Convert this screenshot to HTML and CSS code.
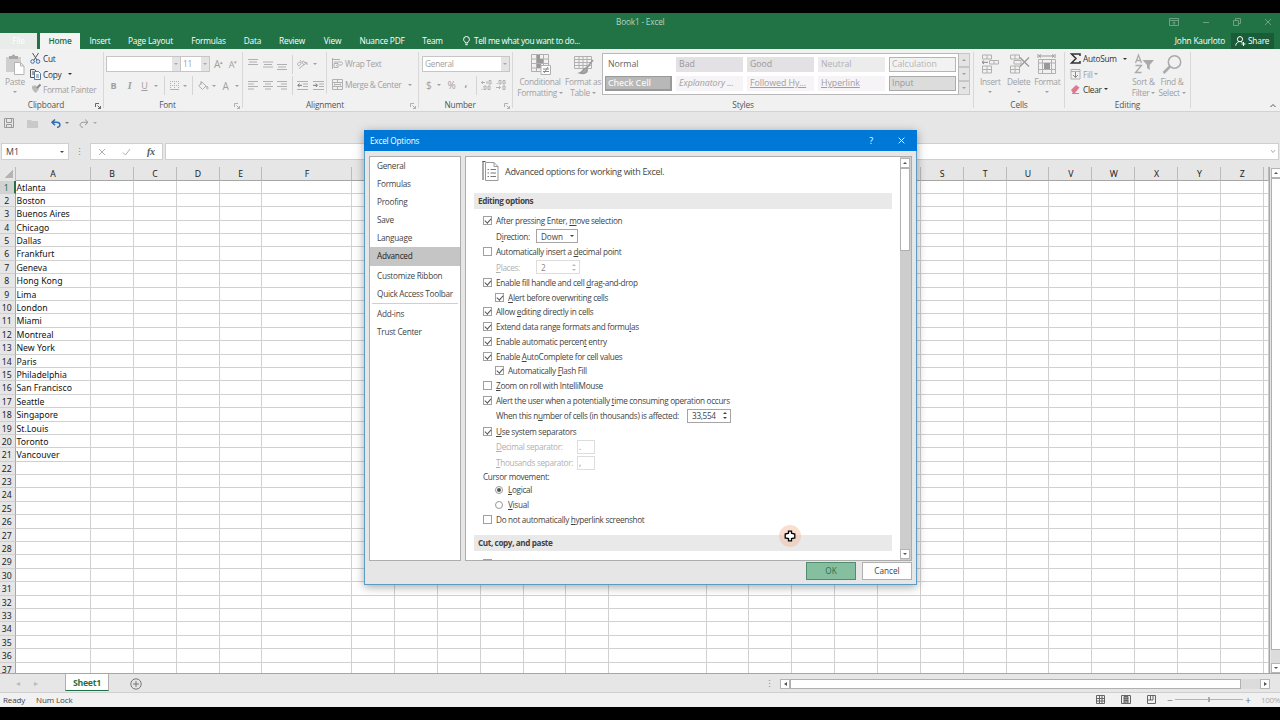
FILE: index.html
```html
<!DOCTYPE html>
<html lang="en">
<head>
    <meta charset="UTF-8">
    <meta name="viewport" content="width=device-width, initial-scale=1.0">
    <title>Book1 - Excel</title>
    <link rel="stylesheet" href="styles.css">
</head>
<body>
<div class="app">
    <!-- title bar -->
    <header class="titlebar">
        <span class="doc-title">Book1 - Excel</span>
        <div class="window-buttons">
            <svg width="10" height="8" viewBox="0 0 10 8"><path d="M.5 .5h9v7h-9zM.5 2.500h9M5 7V4M3.500 5.200L5 3.800l1.500 1.400"/></svg>
            <svg width="8" height="8" viewBox="0 0 8 8"><path d="M1 4.500h6"/></svg>
            <svg width="8" height="8" viewBox="0 0 8 8"><path d="M.5 2.500h5v5h-5zM2.500 2.500v-2h5v5h-2"/></svg>
            <svg width="8" height="8" viewBox="0 0 8 8"><path d="M1 1l6 6M7 1L1 7"/></svg>
        </div>
    </header>

    <nav class="tabs">
        <span class="tab file">File</span>
        <span class="tab active">Home</span>
        <span class="tab" style="width: 40px">Insert</span>
        <span class="tab" style="width: 61px">Page Layout</span>
        <span class="tab" style="width: 55px">Formulas</span>
        <span class="tab" style="width: 33px">Data</span>
        <span class="tab" style="width: 46px">Review</span>
        <span class="tab" style="width: 35px">View</span>
        <span class="tab" style="width: 64px">Nuance PDF</span>
        <span class="tab" style="width: 37px">Team</span>
        <span class="tell-me">
            <svg width="7" height="10" viewBox="0 0 7 10"><path d="M2.300 7V6C1 5.200.6 4.300.6 3.400a2.900 2.900 0 0 1 5.800 0C6.400 4.300 6 5.200 4.700 6v1zM2.300 8.700h2.400"/></svg>
            Tell me what you want to do...
        </span>
        <span class="user">John Kaurloto</span>
        <span class="share">
            <svg width="11" height="10" viewBox="0 0 11 10"><circle cx="5" cy="3.200" r="2.600"/><path d="M.7 9.500c.3-2 1.400-3.300 3-3.700M6 5.700l1.500 1M8.500 6v4M6.500 8h4"/></svg>
            Share
        </span>
    </nav>

    <!-- ribbon -->
    <section class="ribbon">
        <div class="group clipboard">
            <div class="group-body">
                <div class="big-btn paste">
                    <svg width="20" height="21" viewBox="0 0 20 21"><path class="soft" d="M1 3h15v15H1z"/><path class="dark" d="M4 2h3c0-2 3-2 3 0h3v3H4z"/><path class="paper" d="M9.500 8.500h6l3.500 3.500v8.500H9.500zM15.500 8.500V12H19"/></svg>
                    <span>Paste</span><i class="arrow"></i>
                </div>
                <div class="stack">
                    <div class="small-btn on"><svg width="11" height="11" viewBox="0 0 11 11"><path d="M2.500 0l4.500 7M8.500 0L4 7" stroke="#555"/><circle cx="2.600" cy="8.500" r="1.800" stroke="#3d6fa8"/><circle cx="8" cy="8.500" r="1.800" stroke="#3d6fa8"/></svg>Cut</div>
                    <div class="small-btn on"><svg width="11" height="11" viewBox="0 0 11 11"><path d="M4 8.500H.5v-8h4L6 2M2 3h2M2 5h2" stroke="#555"/><path d="M4.500 2.500h4l2 2v6h-6zM6 6h3M6 8h3" fill="#fff" stroke="#56789a"/></svg>Copy <i class="arrow copy-arrow"></i></div>
                    <div class="small-btn painter"><svg width="10" height="10" viewBox="0 0 10 10"><path d="M1 3l4-1 3 3-3 4C3 8 1 6 1 3z" fill="#bbb" stroke="none"/><path d="M2 1.500v3M4 1v3" stroke="#aaa"/><path d="M6 4l3.500-3.500" stroke="#888" stroke-width="2"/></svg>Format Painter</div>
                </div>
            </div>
            <div class="group-name">Clipboard<svg class="launcher on" width="6" height="6" viewBox="0 0 6 6"><path d="M.5 4V.5H4M2.500 2.500l3 3M5.500 3v2.500H3"/></svg></div>
        </div>

        <div class="group font">
            <div class="line one">
                <span class="combo face"><i class="drop"></i></span>
                <span class="combo size">11<i class="drop"></i></span>
                <span class="glyph grow">A<sup>▴</sup></span>
                <span class="glyph shrink">A<sup>▾</sup></span>
            </div>
            <div class="line two">
                <b>B</b><em>I</em><u>U</u><i class="arrow"></i><i class="bar"></i>
                <svg width="9" height="9" viewBox="0 0 9 9"><path d="M0 .5h9M.5 0v9M8.500 0v9M4.500 0v9M0 4.500h9" stroke-dasharray="1 1"/><path d="M0 8.500h9"/></svg>
                <i class="arrow"></i><i class="bar"></i>
                <svg width="11" height="10" viewBox="0 0 11 10"><path d="M4 1l4 4-3.500 3.500L.8 5zM3 0v4M9 5c1.500 2 1 3 .3 3S8 7 9 5z"/></svg>
                <i class="arrow"></i><span class="glyph">A</span><i class="arrow"></i>
            </div>
            <div class="group-name">Font<svg class="launcher" width="6" height="6" viewBox="0 0 6 6"><path d="M.5 4V.5H4M2.500 2.500l3 3M5.500 3v2.500H3"/></svg></div>
        </div>

        <div class="group alignment">
            <div class="align-cols">
                <div class="line one">
                    <svg width="10" height="11" viewBox="0 0 10 11"><path d="M0 .5h10M1 3h8M0 5.500h10"/></svg>
                    <svg width="10" height="11" viewBox="0 0 10 11"><path d="M0 3h10M1 5.500h8M0 8h10"/></svg>
                    <svg width="10" height="11" viewBox="0 0 10 11"><path d="M0 5.500h10M1 8h8M0 10.500h10"/></svg>
                    <i class="bar"></i>
                    <svg width="11" height="10" viewBox="0 0 11 10"><path d="M1 4c2-2 4 0 2 2S0 5 1 4zM3 1l4 5M5 3c2-2 3 0 2 1M2 9.500l8-6M10 6V3.500H7.500"/></svg>
                    <i class="arrow"></i>
                </div>
                <div class="line two">
                    <svg width="10" height="9" viewBox="0 0 10 9"><path d="M0 .5h10M0 3h6M0 5.500h10M0 8h6"/></svg>
                    <svg width="10" height="9" viewBox="0 0 10 9"><path d="M0 .5h10M2 3h6M0 5.500h10M2 8h6"/></svg>
                    <svg width="10" height="9" viewBox="0 0 10 9"><path d="M0 .5h10M4 3h6M0 5.500h10M4 8h6"/></svg>
                    <i class="bar"></i>
                    <svg width="11" height="9" viewBox="0 0 11 9"><path d="M0 .5h11M6 3h5M6 5.500h5M0 8.500h11"/><path d="M5 4.300H1M2.500 2.500L.8 4.300 2.500 6" stroke="#777"/></svg>
                    <svg width="11" height="9" viewBox="0 0 11 9"><path d="M0 .5h11M6 3h5M6 5.500h5M0 8.500h11"/><path d="M0 4.300h4M2.800 2.500l1.700 1.800L2.800 6" stroke="#777"/></svg>
                </div>
            </div>
            <div class="wrap-col">
                <div class="small-btn"><svg width="11" height="11" viewBox="0 0 11 11"><path d="M.5 0v11M1 1.500h7M2 4h7c2 0 2 3 0 3H7M2 5.500h4v4H2zM4 7.500h1"/></svg>Wrap Text</div>
                <div class="small-btn"><svg width="11" height="11" viewBox="0 0 11 11"><path d="M.5 .5h10v10H.5zM.5 3.500h10M.5 7.500h10M5.500 .5v3M5.500 7.500v3M2 5.500h7M3 4.700l-1 .8 1 .8M8 4.700l1 .8-1 .8"/></svg>Merge &amp; Center <i class="arrow merge-arrow"></i></div>
            </div>
            <div class="group-name">Alignment<svg class="launcher" width="6" height="6" viewBox="0 0 6 6"><path d="M.5 4V.5H4M2.500 2.500l3 3M5.500 3v2.500H3"/></svg></div>
        </div>

        <div class="group number">
            <div class="line one"><span class="combo format">General<i class="drop"></i></span></div>
            <div class="line two">
                <span class="glyph">$</span><i class="arrow"></i><span class="glyph">%</span><span class="glyph comma">,</span><i class="bar"></i>
                <svg width="11" height="10" viewBox="0 0 11 10"><path d="M0 2.500h4M2 1L.5 2.500 2 4M6 1v3M8 .5h2v3.500H8zM3 6h2v3.500H3zM7 6h2v3.500H7zM1 9v1"/></svg>
                <svg width="11" height="10" viewBox="0 0 11 10"><path d="M3 .5h2v3.500H3zM7 .5h2v3.500H7zM1 3v1M0 7.500h4M3 6l1.500 1.500L3 9M7 6h2v3.500H7z"/></svg>
            </div>
            <div class="group-name">Number<svg class="launcher" width="6" height="6" viewBox="0 0 6 6"><path d="M.5 4V.5H4M2.500 2.500l3 3M5.500 3v2.500H3"/></svg></div>
        </div>

        <div class="group styles">
            <div class="styles-body">
                <div class="big-btn cond">
                    <svg width="21" height="21" viewBox="0 0 21 21"><path d="M1.500 .5h17v17h-17zM1.500 5h17M1.500 9.500h17M1.500 14h17M6.500 .5v17M13.500 .5v17"/><path d="M7 1h3v4H7zM7 5h6v4H7zM7 10h4v4H7z" fill="#999" stroke="none"/><path d="M11 11.500h9.500v9H11z" fill="#fff"/><path d="M13 15h6M13 17.500h6M18 13l-4 6" stroke="#888"/></svg>
                    <span>Conditional<br>Formatting <i class="arrow"></i></span>
                </div>
                <div class="big-btn as-table">
                    <svg width="21" height="21" viewBox="0 0 21 21"><path d="M1.500 2.500h17v12h-17zM1.500 5.500h17M1.500 8.500h17M1.500 11.500h17M6 2.500v12M10 2.500v12M14 2.500v12"/><path d="M20 6l-7 9M13 14c-3 0-3 4-6 5 4 1 8 0 7-4z" fill="#aaa" stroke="#999" stroke-width="1.500"/></svg>
                    <span>Format as<br>Table <i class="arrow"></i></span>
                </div>
                <div class="gallery">
                    <span class="st normal">Normal</span>
                    <span class="st fill">Bad</span>
                    <span class="st fill">Good</span>
                    <span class="st neutral">Neutral</span>
                    <span class="st calc">Calculation</span>
                    <span class="st check">Check Cell</span>
                    <span class="st expl">Explanatory ...</span>
                    <span class="st link">Followed Hy...</span>
                    <span class="st link">Hyperlink</span>
                    <span class="st input">Input</span>
                </div>
                <div class="gallery-scroll"><span><i class="arrow up"></i></span><span><i class="arrow"></i></span><span><i class="arrow"></i></span></div>
            </div>
            <div class="group-name">Styles</div>
        </div>

        <div class="group cells">
            <div class="cells-body">
                <div class="big-btn">
                    <svg width="20" height="20" viewBox="0 0 20 20"><path d="M2.500 .5h9v4h-9zM7 .5v4M2.500 11.500h9v7h-9zM7 11.500v7M2.500 15h9M9.500 6h9v3.500h-9zM14 6v3.500"/><path d="M8 7.800H2M4 6L2 7.800 4 9.500" stroke="#888"/></svg>
                    <span>Insert</span><i class="arrow"></i>
                </div>
                <div class="big-btn">
                    <svg width="20" height="20" viewBox="0 0 20 20"><path d="M1.500 .5h9v4h-9zM6 .5v4M1.500 11.500h9v7h-9zM6 11.500v7M1.500 15h9M5 6h7v3.500H5z"/><path d="M11 3l9 9M20 3l-9 9" stroke="#999" stroke-width="1.300"/></svg>
                    <span>Delete</span><i class="arrow"></i>
                </div>
                <div class="big-btn">
                    <svg width="20" height="21" viewBox="0 0 20 21"><path d="M1.500 5.500h17v14h-17zM5.500 5.500v14M14.500 5.500v14M1.500 9h17M1.500 15.500h17"/><path d="M2 2h15M4 .5L2 2l2 1.500M15 .5L17 2l-2 1.500M1 0v4M18 0v4" stroke="#999"/><path d="M7 9h6v6H7z" fill="#999" stroke="none"/></svg>
                    <span>Format</span><i class="arrow"></i>
                </div>
            </div>
            <div class="group-name">Cells</div>
        </div>

        <div class="group editing">
            <div class="editing-body">
                <div class="stack">
                    <div class="small-btn on"><svg width="11" height="11" viewBox="0 0 11 11"><path d="M10 3V1H1.500l4.500 4.500L1.500 10H10V8" stroke="#333" stroke-width="1.500"/></svg>AutoSum <i class="arrow sum"></i></div>
                    <div class="small-btn"><svg width="11" height="11" viewBox="0 0 11 11"><path d="M1 .5h9v9.500H1zM1 2.500h9"/><path d="M5.500 3v5.500M3 6l2.500 2.500L8 6" stroke="#888"/></svg>Fill <i class="arrow"></i></div>
                    <div class="small-btn on"><svg width="11" height="11" viewBox="0 0 11 11"><path d="M1 6l5-5 3.500 2.500L5 9H3z" fill="#e0798f" stroke="none"/><path d="M2 9.500h7" stroke="#999"/></svg>Clear <i class="arrow"></i></div>
                </div>
                <div class="big-btn sort">
                    <svg width="20" height="20" viewBox="0 0 20 20"><path d="M1.500 8.500l3-8 3 8M2.500 6h4M1.500 11h6l-6 7h6" stroke="#aaa" stroke-width="1.300"/><path d="M8.500 5.500h11.500l-4.300 5v5l-2.700-2v-3z" fill="#aaa" stroke="none"/></svg>
                    <span>Sort &amp;<br>Filter <i class="arrow"></i></span>
                </div>
                <div class="big-btn find">
                    <svg width="20" height="20" viewBox="0 0 20 20"><circle cx="12.500" cy="7.500" r="6.200" stroke="#aaa" stroke-width="1.500"/><path d="M8 12l-6.500 6.500" stroke="#aaa" stroke-width="2.500"/></svg>
                    <span>Find &amp;<br>Select <i class="arrow"></i></span>
                </div>
            </div>
            <div class="group-name">Editing</div>
        </div>
        <svg class="collapse" width="6" height="5" viewBox="0 0 6 5"><path d="M.5 4L3 1.500 5.500 4"/></svg>
    </section>

    <!-- quick access toolbar -->
    <div class="qat">
        <svg width="10" height="10" viewBox="0 0 10 10"><path d="M.5 .5h9v9h-9zM2.500 .5v4h5v-4M2.500 9.500V6.500h5v3"/></svg>
        <svg width="11" height="9" viewBox="0 0 11 9"><path d="M0 1h4l1 1h6v7H0z" fill="#c9c9c9" stroke="none"/></svg>
        <svg class="undo" width="10" height="9" viewBox="0 0 10 9"><path d="M4 .5L1 3.300l3 2.800M1 3.300h4.500c4.500 0 4.500 5 .5 5"/></svg>
        <i class="arrow"></i>
        <svg class="redo" width="10" height="9" viewBox="0 0 10 9"><path d="M6 .5l3 2.800-3 2.800M9 3.300H4.500C0 3.300 0 8.300 4 8.300"/></svg>
        <i class="arrow pale"></i>
    </div>

    <div class="formula-bar">
        <div class="name-box">M1<i class="arrow"></i></div>
        <span class="grip">⋮</span>
        <div class="fx-box">
            <svg width="8" height="8" viewBox="0 0 8 8"><path d="M1 1l6 6M7 1L1 7"/></svg>
            <svg width="9" height="8" viewBox="0 0 9 8"><path d="M1 4.500l2.500 2.500L8 1"/></svg>
            <span class="fx">fx</span>
        </div>
        <div class="formula"><svg width="6" height="5" viewBox="0 0 6 5"><path d="M1 1l2 2.500L5 1"/></svg></div>
    </div>

    <!-- sheet, cells are filled by sheet.js -->
    <div class="sheet-area">
        <div class="sheet" id="sheet"></div>
        <div class="vscroll">
            <span class="sb-btn"><i class="arrow up"></i></span>
            <span class="thumb"></span>
            <span class="track"></span>
            <span class="sb-btn"><i class="arrow"></i></span>
        </div>
    </div>

    <div class="sheet-tabs">
        <span class="nav-arrow">◂</span><span class="nav-arrow">▸</span>
        <span class="sheet-tab">Sheet1</span>
        <svg class="add-sheet" width="12" height="12" viewBox="0 0 12 12"><circle cx="6" cy="6" r="5.200"/><path d="M6 3v6M3 6h6"/></svg>
        <span class="grip">⋮</span>
        <div class="hscroll">
            <span class="sb-btn"><i class="arrow left"></i></span>
            <span class="thumb"></span>
            <span class="track"></span>
            <span class="sb-btn"><i class="arrow right"></i></span>
        </div>
    </div>

    <footer class="status">
        <span class="ready">Ready</span>
        <span class="numlock">Num Lock</span>
        <svg width="9" height="9" viewBox="0 0 9 9"><path d="M.5 .5h8v8h-8zM3.500 .5v8M6 .5v8M.5 3.500h8M.5 6h8"/></svg>
        <svg width="10" height="9" viewBox="0 0 10 9"><path d="M.5 .5h9v8h-9z"/><path d="M3 1.500h4v7H3zM3 3.500h4M3 5.500h4" fill="#999"/></svg>
        <svg width="9" height="9" viewBox="0 0 9 9"><path d="M.5 .5h8v8h-8zM3.500 .5v4.500M6 .5V5M.5 5h5.500"/></svg>
        <span class="zoom-sign">−</span>
        <span class="zoom-line"><i></i></span>
        <span class="zoom-sign">+</span>
        <span class="zoom-value">100%</span>
    </footer>
</div>

<!-- options dialog -->
<div class="dialog">
    <div class="dialog-title">
        <span>Excel Options</span>
        <span class="help">?</span>
        <svg width="7" height="7" viewBox="0 0 7 7"><path d="M.7 .7l5.600 5.600M6.300 .7L.7 6.300"/></svg>
    </div>
    <div class="dialog-main">
        <ul class="pages">
            <li>General</li>
            <li>Formulas</li>
            <li>Proofing</li>
            <li>Save</li>
            <li>Language</li>
            <li class="selected">Advanced</li>
            <li>Customize Ribbon</li>
            <li>Quick Access Toolbar</li>
            <li class="separator"></li>
            <li>Add-ins</li>
            <li>Trust Center</li>
        </ul>
        <div class="page">
            <div class="options">
                <div class="intro">
                    <svg width="17" height="20" viewBox="0 0 17 20"><path d="M3.500 1.500h8.500l4 4v14H3.500zM12 1.500v4h4"/><path d="M1 0v19M.5 .5h3" stroke="#555"/><path d="M5.500 8.500h1.500M5.500 12h1.500M5.500 15.500h1.500M8.500 8.500h5.500M8.500 12h5.500M8.500 15.500h5.500" stroke="#777"/></svg>
                    Advanced options for working with Excel.
                </div>
                <h2>Editing options</h2>
                <div class="opt"><i class="box checked"></i><span>After pressing Enter, <u>m</u>ove selection</span></div>
                <div class="opt field"><span class="lbl">D<u>i</u>rection:</span><span class="select">Down<i class="arrow"></i></span></div>
                <div class="opt"><i class="box"></i><span>Automatically insert a <u>d</u>ecimal point</span></div>
                <div class="opt field off"><span class="lbl"><u>P</u>laces:</span><span class="spin">2<b><i class="arrow up"></i><i class="arrow"></i></b></span></div>
                <div class="opt"><i class="box checked"></i><span>Enable fill handle and cell <u>d</u>rag-and-drop</span></div>
                <div class="opt sub"><i class="box checked"></i><span><u>A</u>lert before overwriting cells</span></div>
                <div class="opt"><i class="box checked"></i><span>Allow <u>e</u>diting directly in cells</span></div>
                <div class="opt"><i class="box checked"></i><span>Extend data range formats and formu<u>l</u>as</span></div>
                <div class="opt"><i class="box checked"></i><span>Enable automatic percen<u>t</u> entry</span></div>
                <div class="opt"><i class="box checked"></i><span>Enable <u>A</u>utoComplete for cell values</span></div>
                <div class="opt sub"><i class="box checked"></i><span>Automatically <u>F</u>lash Fill</span></div>
                <div class="opt"><i class="box"></i><span><u>Z</u>oom on roll with IntelliMouse</span></div>
                <div class="opt"><i class="box checked"></i><span>Alert the user when a potentially <u>t</u>ime consuming operation occurs</span></div>
                <div class="opt field"><span class="lbl wide">When this n<u>u</u>mber of cells (in thousands) is affected:</span><span class="spin">33,554<b><i class="arrow up"></i><i class="arrow"></i></b></span></div>
                <div class="opt"><i class="box checked"></i><span><u>U</u>se system separators</span></div>
                <div class="opt field off"><span class="lbl sep"><u>D</u>ecimal separator:</span><span class="mini">.</span></div>
                <div class="opt field off"><span class="lbl sep"><u>T</u>housands separator:</span><span class="mini">,</span></div>
                <div class="opt caption"><span>Cursor movement:</span></div>
                <div class="opt sub"><i class="radio on"></i><span><u>L</u>ogical</span></div>
                <div class="opt sub"><i class="radio"></i><span><u>V</u>isual</span></div>
                <div class="opt"><i class="box"></i><span>Do not automatically <u>h</u>yperlink screenshot</span></div>
                <h2 class="next">Cut, copy, and paste</h2>
                <div class="opt"><i class="box"></i></div>
            </div>
            <div class="page-scroll">
                <span class="sb-btn"><i class="arrow up"></i></span>
                <span class="thumb"></span>
                <span class="track"></span>
                <span class="sb-btn"><i class="arrow"></i></span>
            </div>
        </div>
    </div>
    <div class="dialog-buttons">
        <span class="btn ok">OK</span>
        <span class="btn">Cancel</span>
    </div>
</div>

<!-- mouse pointer with click highlight -->
<div class="pointer">
    <svg width="12" height="12" viewBox="0 0 12 12"><path d="M4.500 1.200h3v2l3.300.8v4l-3.300.5v2.300h-3v-2.300L1.200 8V4l3.300-.8z"/></svg>
</div>

<script src="sheet.js"></script>
</body>
</html>
```
FILE: sheet.js
```js
const cities = ['Atlanta', 'Boston', 'Buenos Aires', 'Chicago', 'Dallas', 'Frankfurt', 'Geneva',
    'Hong Kong', 'Lima', 'London', 'Miami', 'Montreal', 'New York', 'Paris', 'Philadelphia',
    'San Francisco', 'Seattle', 'Singapore', 'St.Louis', 'Toronto', 'Vancouver'];
const letters = 'ABCDEFGHIJKLMNOPQRSTUVWXYZ';
const sheet = document.getElementById('sheet');

function add(text, className) {
    const cell = document.createElement('div');
    cell.className = className;
    cell.textContent = text;
    sheet.appendChild(cell);
}

// header row, the columns under the dialog stay blank
add('', 'corner');
for (const letter of letters) {
    add(letter > 'F' && letter < 'S' ? '' : letter, 'col-head');
}
add('', 'col-head');

for (let row = 1; row <= 37; row++) {
    add(row, row === 1 ? 'row-head current' : 'row-head');
    add(cities[row - 1] || '', 'cell');
    for (let col = 1; col <= 26; col++) {
        add('', 'cell');
    }
}
```
FILE: styles.css
```css
* {
    box-sizing: border-box;
}

body {
    margin: 0;
    width: 1280px;
    height: 720px;
    overflow: hidden;
    background: #000;
    font-family: "Open Sans", "Noto Sans", sans-serif;
    font-size: 8.300px;
    letter-spacing: -0.280px;
    color: #444;
    white-space: nowrap;
}

svg {
    display: block;
    flex: none;
    fill: none;
    stroke: #b0b0b0;
    overflow: visible;
}

.app {
    display: flex;
    flex-direction: column;
    height: 694px;
    margin-top: 13px;
    background: #e6e6e6;
}

.arrow {
    flex: none;
    display: inline-block;
    border: 2px solid transparent;
    border-top-color: currentColor;
    border-bottom: none;
    vertical-align: middle;
}

.arrow.up {
    border-top: none;
    border-bottom: 2px solid currentColor;
}

.arrow.left {
    border: 2px solid transparent;
    border-right: 3px solid currentColor;
    border-left: none;
}

.arrow.right {
    border: 2px solid transparent;
    border-left: 3px solid currentColor;
    border-right: none;
}

/* title bar and tabs */
.titlebar {
    display: flex;
    align-items: center;
    height: 20px;
    padding: 0 8px 3px 616px;
    background: #217346;
    color: #b5d3c1;
    letter-spacing: -0.200px;
}

.window-buttons {
    display: flex;
    gap: 23px;
    margin-left: auto;
}

.window-buttons svg {
    stroke: #6da384;
}

.tabs {
    display: flex;
    height: 16px;
    background: #217346;
    color: #fff;
    line-height: 16px;
    letter-spacing: -0.200px;
}

.tab {
    text-align: center;
}

.tab.file {
    width: 37px;
    margin-right: 3px;
    background: #e9ece9;
    color: #fff;
}

.tab.active {
    width: 40px;
    background: #f3f3f3;
    color: #217346;
    font-weight: 600;
}

.tell-me,
.share {
    display: flex;
    align-items: center;
    gap: 5px;
}

.tell-me {
    margin-left: 12px;
    gap: 4px;
    letter-spacing: -0.330px;
}

.tell-me svg,
.share svg {
    stroke: #fff;
}

.user {
    margin-left: auto;
}

.share {
    width: 43px;
    margin: 0 6px 0 6px;
    padding-left: 4px;
    gap: 2px;
    background: #1a5c38;
}

/* ribbon */
.ribbon {
    position: relative;
    display: flex;
    height: 63px;
    background: #f1f1f1;
    border-bottom: 1px solid #d2d2d2;
    color: #a0a0a0;
}

.group {
    display: flex;
    flex-direction: column;
    flex: none;
    margin: 3px 0;
    border-right: 1px solid #d8d8d8;
}

.clipboard { width: 104px; }
.font { width: 139px; }
.alignment { width: 176px; }
.number { width: 94px; }
.styles { width: 461px; }
.cells { width: 91px; }
.editing { width: 126px; }

.group-name {
    display: flex;
    justify-content: center;
    position: relative;
    height: 10px;
    margin-top: auto;
    line-height: 13px;
    letter-spacing: -0.150px;
    color: #555;
}

/* the name sits a little left of the group's middle */
.clipboard .group-name,
.font .group-name,
.alignment .group-name,
.number .group-name {
    padding-right: 11px;
}

.launcher {
    position: absolute;
    right: 2px;
    bottom: -1px;
}

.launcher.on {
    stroke: #666;
}

.group-body,
.styles-body,
.cells-body,
.editing-body {
    display: flex;
}

.big-btn {
    display: flex;
    flex-direction: column;
    align-items: center;
    text-align: center;
    line-height: 10.600px;
    padding-top: 2px;
}

.big-btn svg {
    height: 21px;
    margin-bottom: 2px;
}

.big-btn > .arrow {
    margin-top: 3px;
}

.paste {
    width: 30px;
}

.paste svg path { stroke: none; }
.paste .soft { fill: #cfcfcf; }
.paste .dark { fill: #a8a8a8; }
.paste svg .paper { fill: #fff; stroke: #b5b5b5; }

.small-btn {
    display: flex;
    align-items: center;
    height: 15.400px;
    gap: 2px;
}

.small-btn.on {
    color: #333;
}

.small-btn .copy-arrow {
    margin-left: 5px;
}

.small-btn .merge-arrow {
    margin-left: 5px;
}

.stack .painter svg {
    margin-left: 1px;
}

.painter,
.wrap-col {
    letter-spacing: -0.330px;
}

.stack {
    margin-top: -1px;
}

.line {
    display: flex;
    align-items: center;
}

.line.one {
    height: 24px;
}

.line.two {
    height: 18px;
}

.glyph {
    font-size: 10px;
}

.glyph sup {
    font-size: 5px;
}

.font .one {
    padding-left: 2px;
}

.combo {
    display: flex;
    height: 16px;
    padding-left: 2px;
    border: 1px solid #c6c6c6;
    background: #fff;
    line-height: 14px;
}

.combo.face { width: 75px; }
.combo.format { width: 88px; }

.combo.size {
    width: 29px;
    border-left: none;
}

.drop {
    display: flex;
    align-items: center;
    justify-content: center;
    width: 8px;
    margin-left: auto;
    background: #e4e4e4;
}

.drop::before {
    content: "";
    border: 2px solid transparent;
    border-top-color: #aaa;
    border-bottom: none;
}

.grow {
    margin-left: 4px;
}

.shrink {
    margin-left: 6px;
    font-size: 9px;
}

.font .two {
    display: grid;
    grid-template-columns: 17px 15px 15px 8px 8px 13px 8px 7px 14px 8px 15px 8px;
    justify-items: center;
    padding-left: 1px;
    font-size: 9px;
}

.font .two em {
    font-family: "Liberation Serif", serif;
    font-size: 10px;
    font-weight: 700;
}

.bar {
    flex: none;
    width: 1px;
    height: 19px;
    background: #d4d4d4;
}

.alignment {
    display: grid;
    grid-template-columns: 84px 1fr;
    grid-template-rows: 42px 1fr;
}

.alignment .group-name {
    grid-column: 1 / 3;
}

.align-cols {
    border-right: 1px solid #d8d8d8;
    padding-left: 5px;
}

.align-cols .line {
    gap: 4.500px;
}

.wrap-col {
    padding-left: 5px;
}

.wrap-col .small-btn {
    height: 23px;
}

.wrap-col .small-btn + .small-btn {
    height: 19px;
}

.number .line {
    padding-left: 3px;
}

.number .two {
    padding-left: 7px;
}

.number .two .arrow { margin: 0 6px; }
.number .comma { margin: -4px 9px 0 9px; font-weight: 700; }
.number .two svg { margin-left: 4px; }

/* cell styles gallery */
.cond {
    width: 48px;
    margin-left: 3px;
}

.as-table {
    width: 38px;
}

.gallery {
    display: grid;
    grid-template-columns: repeat(5, 67px);
    grid-template-rows: 15px 15px;
    gap: 4px;
    width: 357px;
    height: 42px;
    margin-top: 1px;
    padding: 3px 2px;
    border: 1px solid #b8b8b8;
    background: #fff;
}

.st {
    padding-left: 3px;
    line-height: 15px;
    font-size: 8.800px;
    letter-spacing: -0.050px;
    background: #f6f4f6;
}

.st.normal { background: #fff; color: #666; }
.st.fill { background: #e3e1e3; color: #999; }
.st.neutral { background: #ececec; color: #b0b0b0; }
.st.calc { border: 1px solid #b5b5b5; background: #f2f2f2; color: #b5b5b5; line-height: 13px; padding-left: 2px; }
.st.check { border: 1px solid #999; border-width: 1px 2px 2px 1px; background: #b8b8b8; color: #f4f4f4; font-weight: 600; line-height: 12px; padding-left: 2px; }
.st.expl { font-style: italic; }
.st.link { text-decoration: underline; }
.st.input { border: 1px solid #aaa; background: #dcdcdc; color: #999; line-height: 13px; padding-left: 2px; }

.gallery-scroll {
    display: flex;
    flex-direction: column;
    width: 11px;
    height: 42px;
    margin-top: 1px;
}

.gallery-scroll span {
    display: flex;
    flex: 1;
    align-items: center;
    justify-content: center;
    border: 1px solid #c6c6c6;
    border-left: none;
    background: #e4e4e4;
}

.cells-body {
    padding-left: 2px;
}

.cells-body .big-btn {
    width: 28.500px;
}

.editing-body {
    padding-left: 5px;
}

.editing .stack {
    width: 59px;
}

.editing .stack .sum {
    margin-left: 4px;
}

.sort {
    width: 29px;
}

.find {
    width: 28px;
}

.collapse {
    position: absolute;
    right: 4px;
    bottom: 3px;
    stroke: #555;
}

/* quick access toolbar */
.qat {
    display: flex;
    align-items: center;
    height: 31px;
    padding: 0 0 9px 4px;
    color: #777;
}

.qat svg { stroke: #999; }
.qat svg + svg { margin-left: 13px; }
.qat .undo { stroke: #2f6cb0; stroke-width: 1.500; }
.qat .arrow { margin-left: 4px; }
.qat .redo { margin-left: 10px; }
.qat .pale { color: #aaa; }

.formula-bar {
    display: flex;
    height: 24px;
    color: #555;
}

.name-box,
.fx-box,
.formula {
    display: flex;
    align-items: center;
    height: 17px;
    border: 1px solid #cfcfcf;
    background: #fff;
}

.name-box {
    width: 68px;
    margin-left: 1px;
    padding: 0 4px 0 4px;
    justify-content: space-between;
    color: #444;
    font-size: 8.800px;
    letter-spacing: 0;
}

.formula-bar .grip {
    width: 21px;
    text-align: center;
    font-size: 9px;
    line-height: 18px;
    color: #888;
}

.fx-box {
    width: 73px;
    padding-left: 7px;
    gap: 16px;
}

.fx {
    font-family: "Liberation Serif", serif;
    font-size: 10px;
    font-style: italic;
    font-weight: 700;
}

.formula {
    flex: 1;
    justify-content: flex-end;
    margin: 0 1px 0 2px;
    padding-right: 2px;
}

/* sheet */
.sheet-area {
    display: flex;
    height: 507px;
    border-bottom: 1px solid #a6a6a6;
    overflow: hidden;
}

.sheet {
    display: grid;
    width: 1270px;
    flex: none;
    grid-template-columns: 15.500px 75px 43px 43px 43px 42.500px 90px repeat(6, 42.900px) 97.200px repeat(13, 42.860px) 5px;
    grid-template-rows: 13.500px repeat(37, 13.403px);
    border-right: 1px solid #a6a6a6;
    font-family: "Noto Sans", sans-serif;
    font-size: 8.700px;
    letter-spacing: 0;
    color: #111;
    line-height: 14px;
}

.cell {
    padding-left: 1px;
    border: solid #d0d0d0;
    border-width: 0 1px 1px 0;
    background: #fff;
}

.col-head,
.row-head,
.corner {
    text-align: center;
    color: #222;
}

.col-head {
    padding-left: 1px;
    border-right: 1px solid #bbb;
    border-bottom: 1px solid #a6a6a6;
}

.corner {
    background: linear-gradient(135deg, transparent 50%, #b4b4b4 50%) 5px 3px / 8px 8px no-repeat;
    border-right: 1px solid #bbb;
}

.row-head {
    padding-right: 1px;
    border-right: 1px solid #a6a6a6;
    border-bottom: 1px solid #cfcfcf;
}

.row-head.current {
    background: #d2d2d2;
    border-right: 2px solid #217346;
    color: #217346;
}

.sb-btn {
    display: flex;
    flex: none;
    align-items: center;
    justify-content: center;
    width: 10px;
    height: 10px;
    border: 1px solid #b5b5b5;
    background: #fff;
    color: #555;
}

.thumb {
    border: 1px solid #b0b0b0;
    background: #fff;
}

.track {
    flex: 1;
    background: #cdcdcd;
}

.vscroll {
    display: flex;
    flex-direction: column;
    margin-left: 1px;
    width: 10px;
    padding-top: 1px;
}

.vscroll .thumb {
    height: 472px;
}

.vscroll .track {
    background: #dcdcdc;
}

/* sheet tabs and status bar */
.sheet-tabs {
    display: flex;
    height: 19px;
    border-bottom: 1px solid #cfcfcf;
    line-height: 18px;
}

.nav-arrow {
    width: 18px;
    text-align: right;
    color: #bbb;
}

.nav-arrow:first-child {
    width: 20px;
}

.sheet-tab {
    width: 44px;
    height: 17px;
    margin-left: 27px;
    border: solid #b0b0b0;
    border-width: 0 1px;
    border-bottom: 1px solid #217346;
    background: #fff;
    color: #217346;
    font-size: 8.700px;
    font-weight: 700;
    text-align: center;
}

.add-sheet {
    margin: 4px 0 0 21px;
    stroke: #777;
}

.sheet-tabs .grip {
    margin-left: auto;
    font-size: 9px;
    line-height: 19px;
    color: #888;
}

.hscroll {
    display: flex;
    width: 490px;
    height: 10px;
    margin: 5px 10px 0 6px;
}

.hscroll .thumb {
    width: 451px;
}

.hscroll .track {
    background: #dcdcdc;
}

.status {
    display: flex;
    align-items: center;
    height: 14px;
    padding-bottom: 1px;
    background: #f1f1f1;
    font-size: 8px;
    letter-spacing: -0.100px;
}

.status svg { margin-right: 16px; stroke: #666; }
.status svg:last-of-type { margin-right: 11px; }
.ready { width: 36px; padding-left: 3px; }
.numlock { margin-right: auto; }
.zoom-sign { width: 6px; text-align: center; font-size: 10px; color: #777; }

.zoom-line {
    display: flex;
    align-items: center;
    justify-content: center;
    width: 68px;
    height: 1px;
    margin: 0 2px;
    background: #b5b5b5;
}

.zoom-line i {
    width: 2px;
    height: 5px;
    background: #aaa;
}

.zoom-value {
    width: 19px;
    margin-left: 10px;
    color: #aaa;
    letter-spacing: -0.300px;
}

/* options dialog */
.dialog {
    position: absolute;
    left: 364px;
    top: 130px;
    display: flex;
    flex-direction: column;
    width: 553px;
    height: 455px;
    border: 1px solid #5a9cc4;
    background: #e6e6e6;
    box-shadow: 0 2px 9px rgba(0, 0, 0, 0.350);
    font-size: 8.200px;
    letter-spacing: -0.310px;
    color: #444;
}

.dialog-title {
    display: flex;
    align-items: center;
    height: 21px;
    margin: -1px -1px 0;
    padding: 0 12px 1px 6px;
    background: #0078d7;
    color: #fff;
    letter-spacing: -0.200px;
}

.dialog-title .help {
    margin: 0 25px 0 auto;
    font-size: 9px;
}

.dialog-title svg {
    stroke: #fff;
}

.dialog-main {
    display: flex;
    gap: 4px;
    height: 405px;
    margin: 5px 4px 0 4px;
}

.pages {
    width: 92px;
    margin: 0;
    padding: 0;
    border: 1px solid #adadad;
    background: #fff;
    list-style: none;
    line-height: 17px;
    letter-spacing: -0.240px;
}

.pages li {
    height: 18.100px;
    padding-left: 7px;
}

.pages .selected {
    margin-bottom: 1.500px;
    background: #c5c5c5;
    color: #222;
}

.pages .separator {
    height: 1px;
    margin: 0 2px 0.500px;
    background: #d0d0d0;
}

.page {
    display: flex;
    flex: 1;
    border: 1px solid #adadad;
    background: #fff;
    overflow: hidden;
}

.options {
    flex: 1;
    padding-left: 8px;
    overflow: hidden;
}

.intro {
    display: flex;
    align-items: center;
    gap: 6px;
    height: 36px;
    padding: 0 0 8px 8px;
    font-size: 9px;
}

.page svg {
    stroke: #999;
}

.options h2 {
    width: 418px;
    height: 16px;
    margin: 0 0 4.600px;
    padding-left: 4px;
    background: #e9e9e9;
    font-size: 8.200px;
    font-weight: 700;
    letter-spacing: -0.400px;
    line-height: 15px;
}

.options h2.next {
    margin: 8.400px 0 4.600px;
}

.opt {
    display: flex;
    align-items: center;
    height: 14.750px;
    padding-left: 9px;
    gap: 4px;
}

.opt.sub {
    padding-left: 21px;
}

.opt.field {
    height: 16px;
    padding-left: 22px;
    gap: 0;
}

.opt.caption {
    height: 12px;
}

.opt.off {
    color: #b0b0b0;
}

.opt u {
    text-underline-offset: 1px;
    text-decoration-thickness: 0.500px;
}

.box {
    position: relative;
    flex: none;
    width: 9px;
    height: 9px;
    border: 1px solid #a0a0a0;
}

/* tick mark */
.box.checked::after {
    content: "";
    position: absolute;
    left: 2px;
    top: 0;
    width: 2.500px;
    height: 5px;
    border: solid #555;
    border-width: 0 1px 1px 0;
    transform: rotate(42deg);
}

.radio {
    display: flex;
    align-items: center;
    justify-content: center;
    width: 8px;
    height: 8px;
    border: 1px solid #999;
    border-radius: 50%;
    margin-right: 1px;
}

.radio.on::after {
    content: "";
    width: 4px;
    height: 4px;
    border-radius: 50%;
    background: #555;
}

.lbl {
    width: 40px;
}

.lbl.wide {
    width: 191px;
}

.lbl.sep {
    width: 81px;
}

.select,
.spin,
.mini {
    display: flex;
    align-items: center;
    justify-content: space-between;
    height: 14px;
    border: 1px solid #a5a5a5;
    letter-spacing: -0.100px;
}

.select {
    width: 42px;
    padding: 0 3px 0 4px;
}

.spin {
    width: 44px;
    padding: 0 3px 0 4px;
    letter-spacing: -0.300px;
}

.mini {
    width: 18px;
    padding-left: 1px;
}

.spin b {
    display: flex;
    flex-direction: column;
    gap: 3px;
}

.off .spin,
.off .mini {
    border-color: #ddd;
    color: #888;
}

.off .arrow {
    color: #bbb;
}

.page-scroll {
    display: flex;
    flex-direction: column;
    width: 11px;
    padding: 1px 1px 1px 0;
    background: #cdcdcd;
}

.page-scroll .thumb {
    height: 83px;
}

.dialog-buttons {
    display: flex;
    justify-content: flex-end;
    gap: 6px;
    margin: 1px 4px 0 0;
}

.btn {
    width: 50px;
    height: 18px;
    border: 1px solid #b0b0b0;
    background: #fdfdfd;
    text-align: center;
    line-height: 15px;
    letter-spacing: 0;
}

.btn.ok {
    border-color: #4f8d6c;
    background: #86bf9f;
    color: #2f6b4b;
}

.pointer {
    position: absolute;
    left: 779px;
    top: 525px;
    display: flex;
    align-items: center;
    justify-content: center;
    width: 22px;
    height: 22px;
    border-radius: 50%;
    background: rgba(240, 185, 150, 0.450);
}

.pointer svg {
    fill: #fff;
    stroke: #000;
    stroke-width: 1.300;
}
```
